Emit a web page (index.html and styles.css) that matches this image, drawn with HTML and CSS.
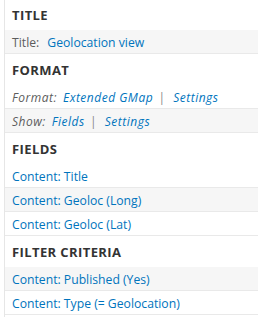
FILE: index.html
```html
<!doctype html>
<html lang="en">
<head>
    <meta charset="UTF-8">
    <title>Views display settings</title>
    <link rel="stylesheet" href="styles.css">
</head>
<body>
<div class="column">
    <div class="bucket">
        <h3 class="bucket-title">Title</h3>
        <div class="setting odd">
            <span class="label">Title:</span><a href="#">Geolocation view</a>
        </div>
    </div>

    <div class="bucket">
        <h3 class="bucket-title">Format</h3>
        <div class="setting even em">
            <span class="label">Format:</span><a href="#">Extended GMap</a><span class="sep">|</span><a href="#">Settings</a>
        </div>
        <div class="setting odd em">
            <span class="label">Show:</span><a href="#">Fields</a><span class="sep">|</span><a href="#">Settings</a>
        </div>
    </div>

    <div class="bucket">
        <h3 class="bucket-title">Fields</h3>
        <div class="setting even"><a href="#">Content: Title</a></div>
        <div class="setting odd"><a href="#">Content: Geoloc (Long)</a></div>
        <div class="setting even"><a href="#">Content: Geoloc (Lat)</a></div>
    </div>

    <div class="bucket">
        <h3 class="bucket-title">Filter criteria</h3>
        <div class="setting odd"><a href="#">Content: Published (Yes)</a></div>
        <div class="setting even"><a href="#">Content: Type (= Geolocation)</a></div>
    </div>
</div>
</body>
</html>
```

FILE: styles.css
```css
html, body {
    margin: 0;
    padding: 0;
    background: #fff;
}

body {
    font-family: "Open Sans", "DejaVu Sans", sans-serif;
    font-size: 12.2px;
    color: #5c5c5c;
}

.column {
    margin-left: 4px;
    min-height: 317px;
    border-left: 1px solid #e6e6e6;
}

.bucket-title {
    margin: 0;
    padding: 8px 7px 6px;
    font-size: 13px;
    line-height: 17px;
    font-weight: bold;
    letter-spacing: 0.4px;
    text-transform: uppercase;
    color: #333;
}

.bucket:first-child .bucket-title {
    padding-top: 7px;
}

.setting {
    padding: 4px 7px 2px;
    line-height: 17px;
    border-bottom: 1px solid #e9e9e9;
    white-space: nowrap;
}

.setting.odd {
    background-color: #f6f6f6;
}

.setting.even {
    background-color: #fff;
}

a {
    color: #0074bd;
    text-decoration: none;
}

.label {
    margin-right: 8px;
}

.em {
    font-style: italic;
    font-size: 12px;
    letter-spacing: 0.5px;
}

.em .label {
    margin-right: 6px;
}

.sep {
    margin: 0 8px 0 5px;
    color: #888;
}
```
